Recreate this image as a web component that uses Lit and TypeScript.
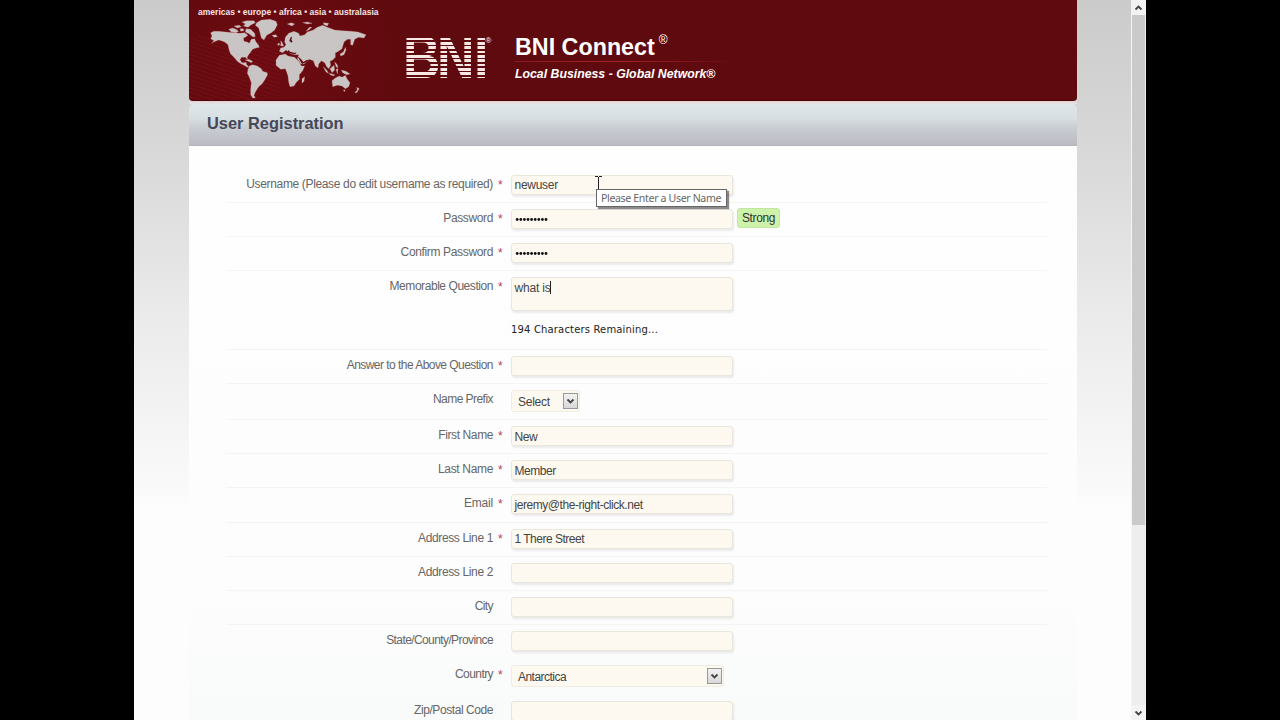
import { LitElement, html, css, svg } from "lit";
import { customElement } from "lit/decorators.js";

interface Row {
  label: string;
  ls: number;
  req?: boolean;
  kind?: "text" | "password" | "area" | "select";
  value?: string;
  vls?: number;
  h: number;
  w?: number;
  user?: boolean;
  strong?: boolean;
  plain?: boolean;
  low?: boolean;
}

const ROWS: Row[] = [
  { label: "Username (Please do edit username as required)", ls: -0.35, req: true, value: "newuser", vls: -0.28, h: 34, user: true },
  { label: "Password", ls: -0.37, req: true, kind: "password", h: 34, strong: true },
  { label: "Confirm Password", ls: -0.35, req: true, kind: "password", h: 34 },
  { label: "Memorable Question", ls: -0.44, req: true, kind: "area", value: "what is", vls: -0.2, h: 79, low: true },
  { label: "Answer to the Above Question", ls: -0.54, req: true, h: 34 },
  { label: "Name Prefix", ls: -0.54, kind: "select", value: "Select", vls: -0.25, h: 36, w: 69, low: true },
  { label: "First Name", ls: -0.4, req: true, value: "New", vls: -0.4, h: 34, low: true },
  { label: "Last Name", ls: -0.33, req: true, value: "Member", vls: -0.45, h: 34, low: true },
  { label: "Email", ls: -0.2, req: true, value: "jeremy@the-right-click.net", vls: -0.44, h: 35, low: true },
  { label: "Address Line 1", ls: -0.36, req: true, value: "1 There Street", vls: -0.5, h: 34 },
  { label: "Address Line 2", ls: -0.36, h: 34 },
  { label: "City", ls: -0.6, h: 34 },
  { label: "State/County/Province", ls: -0.6, h: 34, plain: true },
  { label: "Country", ls: -0.57, req: true, kind: "select", value: "Antarctica", vls: -0.53, h: 36, w: 213, plain: true, low: true },
  { label: "Zip/Postal Code", ls: -0.43, h: 34 },
];

@customElement("world-map")
export class WorldMap extends LitElement {
  static styles = css`
    :host { display: block; }
    svg { display: block; }
  `;
  render() {
    return html`<svg width="174" height="84" viewBox="66 54 522 252">
      ${svg`<g fill="#c9c5c5" stroke="#d98b88" stroke-width="0.8" stroke-linejoin="round">
      <path d="M80 98 90 94 104 94 118 95 134 97 150 98 168 100 182 98 192 106 184 112 178 114 180 124 190 126 196 130 202 118 212 116 216 126 224 136 226 142 216 144 206 148 200 156 194 164 190 170 190 178 184 172 172 172 168 180 174 188 182 188 186 186 188 194 194 200 190 202 180 196 168 190 160 184 150 172 140 162 136 152 134 144 132 134 122 126 112 122 104 120 94 124 82 130 90 122 80 116 84 108Z"/>
      <path d="M134 88 146 84 156 88 164 94 156 98 142 96ZM150 78 166 76 172 80 160 84ZM174 66 188 62 210 62 214 68 202 74 192 82 178 78 184 72ZM186 86 200 88 212 100 214 110 206 110 196 102 184 96ZM168 86 178 86 180 92 170 94Z"/>
      <path d="M218 68 232 60 258 58 276 64 280 74 272 90 262 98 248 106 240 120 232 114 228 98 224 84 214 76ZM264 106 276 104 280 110 270 112Z"/>
      <path d="M184 180 194 178 206 184 202 188ZM196 198 206 194 220 198 232 206 236 214 250 218 250 226 242 240 234 252 226 258 220 266 214 276 210 286 214 294 206 294 200 284 200 268 202 248 196 232 190 220 192 208Z"/>
      <path d="M286 154 290 144 300 142 306 134 302 126 304 112 314 100 330 94 344 100 348 108 362 104 370 96 388 90 400 82 416 76 430 82 452 90 476 92 502 94 522 96 546 104 540 114 524 112 512 118 506 136 500 134 500 118 490 118 480 126 474 146 460 156 454 158 454 172 446 180 438 184 440 196 434 206 428 200 422 188 412 182 404 192 402 204 394 198 388 182 376 178 360 192 350 192 340 176 344 164 334 164 322 162 314 156 306 150 296 158Z"/>
      <path d="M290 122 295 128 299 138 289 137 291 131ZM282 130 287 130 286 136 281 136Z"/>
      <path d="M286 166 304 162 312 168 332 172 344 184 352 198 362 198 356 212 346 224 346 238 336 248 330 258 318 260 314 246 312 228 308 216 304 206 290 208 276 196 276 180ZM354 236 362 230 360 244 354 250Z"/>
      <path d="M310 72 322 68 332 72 324 78ZM356 68 370 66 384 70 370 72ZM366 94 376 82 384 82 374 90ZM418 68 434 70 430 78 420 74Z"/>
      <path d="M418 200 428 210 434 220 426 216ZM438 206 450 196 452 210 444 218ZM436 220 452 224 450 228 438 224ZM456 208 462 206 460 222ZM472 210 486 214 498 222 488 224 476 218ZM452 186 460 194 462 204 456 200ZM468 162 478 156 484 142 486 150 480 164 470 168Z"/>
      <path d="M444 242 454 234 466 228 474 232 484 226 490 238 498 248 494 260 484 266 474 258 460 256 446 260ZM478 270 484 270 481 275ZM518 262 526 266 518 278 512 278 520 270Z"/></g>
      <path d="m312 150 8 6 10 2 8 0-4 4-12-1-10-5ZM340 168l8 14 6 10 12-5 8-8-6 1-10 6-8-10ZM316 122l4-10 4-2-2 10 4 4-4 4Z" fill="#5f0a0e"/>`}
    </svg>`;
  }
}

@customElement("app-root")
export class AppRoot extends LitElement {
  static styles = css`
    :host {
      display: flex; justify-content: center; width: 1280px; height: 720px; overflow: hidden;
      background: #000; font-family: "Liberation Sans", Arial, sans-serif; font-size: 12px; color: #666;
    }
    * { box-sizing: border-box; }
    .view {
      width: 1012px; height: 720px; display: flex; overflow: hidden;
      background: linear-gradient(#cbcbcb 0, #d8d8d8 150px, #ebebeb 320px, #fafafa 490px, #fdfdfd 510px);
    }
    .page { width: 888px; margin-left: 55px; flex: none; display: flex; flex-direction: column; }
    .banner {
      height: 101px; flex: none; border-radius: 0 0 4px 4px; display: flex; color: #fff;
      background:
        repeating-linear-gradient(18deg, rgba(160,30,38,.2) 0 1px, transparent 1px 4px) 0 36px / 90px 65px no-repeat,
        radial-gradient(circle at 80px 60px, #6d0b12 0, #5f0a0e 140px);
      border-bottom: 1px solid #4a0508;
    }
    .world { width: 205px; padding: 6px 0 0 9px; flex: none; }
    .regions { font-weight: bold; font-size: 8.5px; line-height: 12px; letter-spacing: .02px; white-space: nowrap; color: #f6e3e1; }
    .world world-map { margin-left: 8px; }
    .logo { width: 121px; flex: none; padding: 30px 0 0 8.5px; display: flex; }
    .bni {
      width: 98px; margin-right: -15px; height: 54px; font-size: 61px; font-weight: bold; line-height: 55px; color: transparent; white-space: nowrap; flex: none;
      transform: scaleX(.85); transform-origin: 0 0;
      background: repeating-linear-gradient(#f8e9e4 0 2.7px, transparent 2.7px 4.35px) 0 -1.2px / 100% 60px;
      -webkit-background-clip: text; background-clip: text;
    }
    .bni .b { letter-spacing: -4px; }
    .bni .n { letter-spacing: -.5px; }
    .reg { font-size: 8px; line-height: 8px; padding-top: 7px; }
    .title { font-size: 23.3px; line-height: 26px; font-weight: bold; display: flex; white-space: nowrap; }
    .title sup { font-size: 12px; line-height: 13px; margin-left: 4px; vertical-align: top; font-weight: normal; }
    .brand { padding-top: 34px; width: 211px; }
    .tag { font-size: 12.3px; line-height: 16px; font-weight: bold; font-style: italic; margin-top: 4px; white-space: nowrap; }
    .rule { height: 1px; background: linear-gradient(90deg, #8d1a1f, #a52328 50%, #6a0c10); margin-top: 1px; }
    .head {
      height: 42px; margin-top: 3px; flex: none; border-radius: 5px 5px 0 0; padding: 9px 18px 0; font-size: 16.4px; line-height: 20px; font-weight: bold; color: #454857;
      background: linear-gradient(#e0e7ea 0, #d9dfe3 14px, #c9ccd2 24px, #bcbdc4 40px, #b2b3b9 42px);
    }
    .gap { height: 3px; flex: none; background: linear-gradient(#e9cfd0, #e4e4e6); margin-bottom: -3px; }
    .form {
      flex: none; height: 574px; padding: 22px 30px 0 37px;
      background: linear-gradient(#fefefe 0, #fdfdfd 440px, #f9fafa 574px); overflow: hidden;
    }
    .row { display: flex; padding-top: 7px; box-shadow: 0 1px #f4f4f4; }
    .row.plain { box-shadow: none; }
    .label { width: 267px; flex: none; text-align: right; line-height: 14px; padding-top: 2px; white-space: nowrap; }
    .star { width: 18px; flex: none; padding: 3px 0 0 5px; color: #b8405a; line-height: 14px; font-size: 12px; }
    .cell { display: flex; align-items: flex-start; gap: 4px; position: relative; }
    .input {
      width: 222px; height: 20px; border: 1px solid #e9e6dc; border-radius: 3px; background: #fdf9f1;
      box-shadow: 1px 2px 2px rgba(0,0,0,.08); padding: 0 2.5px; line-height: 19px; color: #444; white-space: nowrap;
    }
    .low .input { line-height: 20px; }
    .low .select > span:first-child { padding-top: 1px; }
    .area { height: 34px; }
    .caret { display: inline-block; width: 1px; height: 13px; background: #222; vertical-align: -2px; }
    .dots { display: block; margin-top: 7px; }
    .left { font-family: "DejaVu Sans", Verdana, sans-serif; font-size: 10px; line-height: 14px; letter-spacing: .16px; color: #222; margin-top: 12px; }
    .select { height: 22px; border: 1px solid #efece2; border-radius: 3px; background: #fdf9f1; display: flex; justify-content: space-between; align-items: center; padding: 0 1px 0 6px; color: #444; }
    .drop { width: 15px; height: 16px; border: 1px solid #999; background: linear-gradient(#f2f2f2, #d8d8d8); display: flex; align-items: center; justify-content: center; }
    .strong { margin-top: -1px; width: 43px; height: 20px; border: 1px solid #c3e5a2; border-radius: 3px; background: #cdf2a9; color: #333; text-align: center; line-height: 18px; letter-spacing: -.4px; }
    .tip {
      position: absolute; left: 85px; top: 14px; width: 131px; height: 18px; border: 1px solid #666; background: #fff; color: #666; z-index: 2;
      font: 10.6px/16px "Noto Sans", sans-serif; letter-spacing: -.36px; padding-left: 4px; white-space: nowrap; box-shadow: 2px 2px 1px rgba(0,0,0,.45);
    }
    .ibeam { position: absolute; left: 84px; top: 1px; z-index: 1; }
    .bar { width: 15px; height: 720px; margin-left: auto; background: #eee; display: flex; flex-direction: column; border-left: 1px solid #f4f4f4; }
    .btn { height: 15px; flex: none; background: #f3f3f3; display: flex; align-items: center; justify-content: center; padding-right: 2px; }
    .thumb { height: 510px; background: #cacaca; margin-right: 1px; }
    .bar .btn:last-child { margin-top: auto; }
  `;

  private chevron(up = false) {
    return html`<svg width="9" height="8" viewBox="0 0 9 8"><path d=${up ? "M1.5 5.5 4.5 2.5 7.5 5.5" : "M1.5 2.5 4.5 5.5 7.5 2.5"} fill="none" stroke="#444" stroke-width="1.8"/></svg>`;
  }

  private control(r: Row) {
    const spacing = `letter-spacing:${r.vls ?? 0}px`;
    switch (r.kind) {
      case "password":
        return html`<div class="input"><svg class="dots" width="36" height="5" viewBox="0 0 36 5">
          ${Array.from({ length: 9 }, (_, i) => svg`<circle cx=${2.2 + i * 3.6} cy="2.5" r="1.4" fill="#111"/>`)}
        </svg></div>`;
      case "area":
        return html`<div><div class="input area" style=${spacing}>${r.value}<span class="caret"></span></div><div class="left">194 Characters Remaining...</div></div>`;
      case "select":
        return html`<div class="select" style="width:${r.w}px"><span style=${spacing}>${r.value}</span><span class="drop">${this.chevron()}</span></div>`;
      default:
        return html`<div class="input" style=${spacing}>${r.value ?? ""}</div>`;
    }
  }

  render() {
    return html`<div class="view">
      <div class="page">
        <div class="banner">
          <div class="world"><div class="regions">americas • europe • africa • asia • australasia</div><world-map></world-map></div>
          <div class="logo"><div class="bni"><span class="b">B</span><span class="n">N</span>I</div><span class="reg">®</span></div>
          <div class="brand">
            <div class="title">BNI Connect<sup>®</sup></div>
            <div class="rule"></div>
            <div class="tag">Local Business - Global Network®</div>
          </div>
        </div>
        <div class="gap"></div>
        <div class="head">User Registration</div>
        <div class="form">
          ${ROWS.map((r) => html`<div class="row ${r.plain ? "plain" : ""} ${r.low ? "low" : ""}" style="height:${r.h}px">
            <div class="label" style="letter-spacing:${r.ls}px">${r.label}</div><div class="star">${r.req ? "*" : ""}</div>
            <div class="cell">${this.control(r)}${r.strong ? html`<div class="strong">Strong</div>` : ""}
              ${r.user ? html`<svg class="ibeam" width="7" height="16" viewBox="0 0 7 16"><path d="M0 .5H3M4 .5H7M3.5 1V15" stroke="#222" fill="none"/></svg><div class="tip">Please Enter a User Name</div>` : ""}
            </div>
          </div>`)}
        </div>
      </div>
      <div class="bar"><div class="btn">${this.chevron(true)}</div><div class="thumb"></div><div class="btn">${this.chevron()}</div></div>
    </div>`;
  }
}
